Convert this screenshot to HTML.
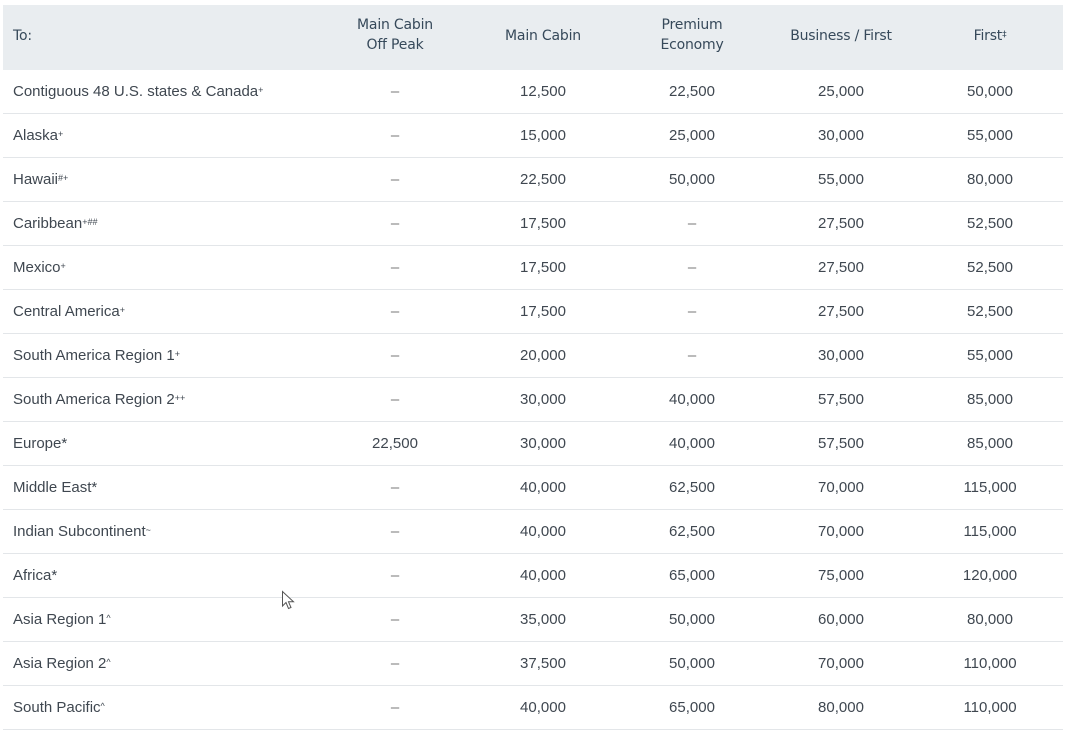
<!DOCTYPE html>
<html><head><meta charset="utf-8"><style>
*{margin:0;padding:0;box-sizing:border-box}
body{width:1068px;height:723px;background:#fff;overflow:hidden;position:relative;font-family:"Liberation Sans",Arial,sans-serif;color:#3f4750}
.hd{position:absolute;left:3px;top:5px;width:1060px;height:65px;background:#e9edf0}
.h{position:absolute;font-family:"DejaVu Sans","Liberation Sans",sans-serif;font-size:14px;color:#36495a;text-align:center;line-height:20px;transform:translateX(-50%);white-space:nowrap;letter-spacing:-0.2px}
.row{position:absolute;left:3px;width:1060px;height:44px;border-bottom:1px solid #e3e6e9}
.c{position:absolute;top:13px;font-size:15px;line-height:18px;transform:translateX(-50%);white-space:nowrap}
.n{position:absolute;left:10px;top:13px;font-size:15px;line-height:18px;white-space:nowrap}
.s{font-size:9px;position:relative;top:-3px;line-height:0}
.dash{color:#777}
</style></head><body>
<div class="hd"></div>
<div class="h" style="left:13px;top:26px;transform:none">To:</div>
<div class="h" style="left:395px;top:15px">Main Cabin<br>Off Peak</div>
<div class="h" style="left:543px;top:26px">Main Cabin</div>
<div class="h" style="left:692px;top:15px">Premium<br>Economy</div>
<div class="h" style="left:841px;top:26px">Business / First</div>
<div class="h" style="left:990px;top:26px">First<span class="s">‡</span></div>
<div id="rows"></div>
<svg style="position:absolute;left:281px;top:590px" width="16" height="22" viewBox="0 0 16 22"><path d="M1.5 1.5 L1.5 16 L5 12.5 L7.5 18.5 L10 17.5 L7.5 11.8 L12.5 11.8 Z" fill="#fff" stroke="#555" stroke-width="1"/></svg>
<script>
function s(t){return '<span class="s">'+t+'</span>';}
var D='<span class="dash">–</span>';
var d=[["Contiguous 48 U.S. states &amp; Canada"+s("+"),D,"12,500","22,500","25,000","50,000"],
["Alaska"+s("+"),D,"15,000","25,000","30,000","55,000"],
["Hawaii"+s("#+"),D,"22,500","50,000","55,000","80,000"],
["Caribbean"+s("+##"),D,"17,500",D,"27,500","52,500"],
["Mexico"+s("+"),D,"17,500",D,"27,500","52,500"],
["Central America"+s("+"),D,"17,500",D,"27,500","52,500"],
["South America Region 1"+s("+"),D,"20,000",D,"30,000","55,000"],
["South America Region 2"+s("++"),D,"30,000","40,000","57,500","85,000"],
["Europe*","22,500","30,000","40,000","57,500","85,000"],
["Middle East*",D,"40,000","62,500","70,000","115,000"],
["Indian Subcontinent"+s("~"),D,"40,000","62,500","70,000","115,000"],
["Africa*",D,"40,000","65,000","75,000","120,000"],
["Asia Region 1"+s("^"),D,"35,000","50,000","60,000","80,000"],
["Asia Region 2"+s("^"),D,"37,500","50,000","70,000","110,000"],
["South Pacific"+s("^"),D,"40,000","65,000","80,000","110,000"]];
var x=[392,540,689,838,987],h="";
d.forEach(function(r,i){h+='<div class="row" style="top:'+(70+i*44)+'px"><div class="n">'+r[0]+'</div>';
for(var j=1;j<6;j++)h+='<div class="c" style="left:'+x[j-1]+'px">'+r[j]+'</div>';h+='</div>';});
document.getElementById('rows').innerHTML=h;
</script>
</body></html>
